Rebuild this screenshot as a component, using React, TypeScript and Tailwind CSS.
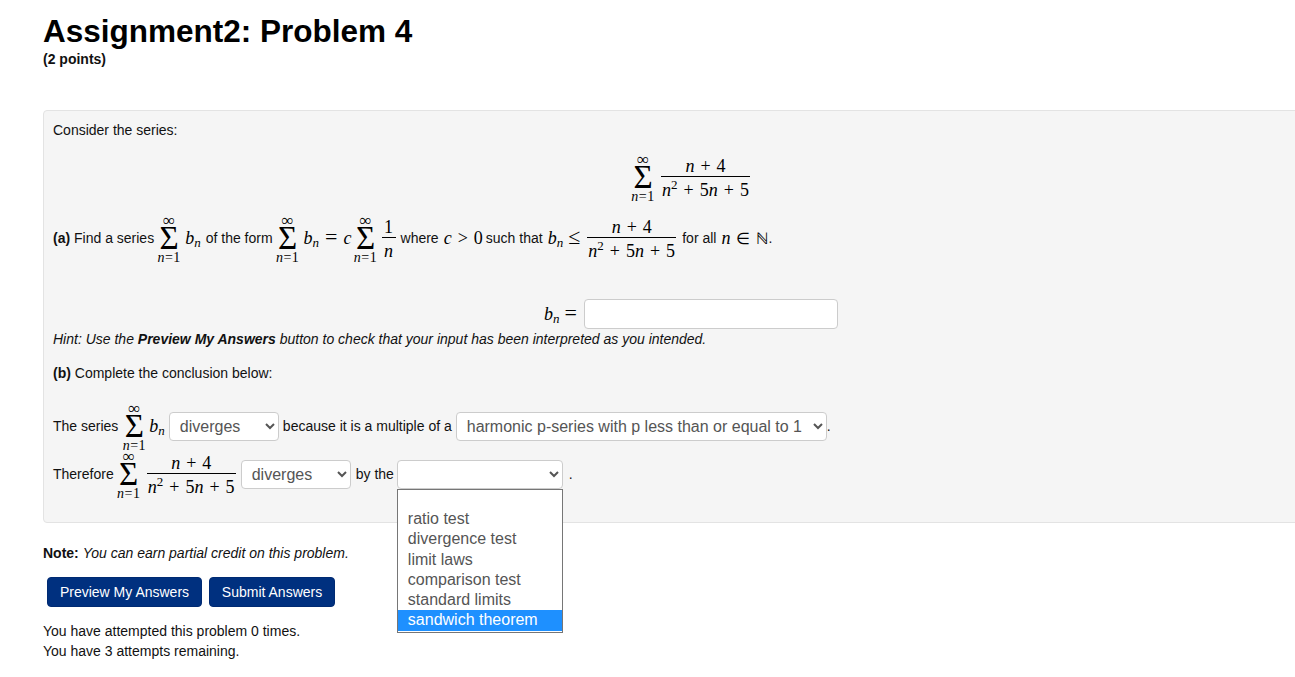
const math = "font-['Liberation_Serif',serif] text-black text-[18px] [word-spacing:1.5px]";

function Sum({ className = '' }: { className?: string }) {
  return (
    <span className={`inline-flex flex-col items-center w-[22px] pt-[3px] font-['Liberation_Serif',serif] text-black ${className}`}>
      <span className="h-[14px] leading-[14px] text-[17px]">∞</span>
      <span className="h-[21px] leading-[21px] text-[33px]">Σ</span>
      <span className="mt-[2px] h-[14px] leading-[14px] text-[14px] tracking-[0.5px] whitespace-nowrap"><i>n</i>=1</span>
    </span>
  );
}

function Bn({ className = '' }: { className?: string }) {
  return (
    <span className={`${math} italic whitespace-nowrap ${className}`}>
      b<sub className="text-[13px]">n</sub>
    </span>
  );
}

function Frac({ top, bottom, width }: { top: React.ReactNode; bottom: React.ReactNode; width: string }) {
  return (
    <span className={`inline-flex flex-col items-center ${width} ${math} whitespace-nowrap`}>
      <span className="h-[23px] leading-[25px] border-b border-black w-full text-center">{top}</span>
      <span className="h-[24px] leading-[27px]">{bottom}</span>
    </span>
  );
}

const numerator = <><i>n</i> + 4</>;
const denominator = <><i>n</i><sup className="text-[13px]">2</sup> + 5<i>n</i> + 5</>;

const selectCls = "h-[29px] bg-white border border-[#ccc] rounded-[4px] text-[16px] text-[#555] px-[6px] font-['Liberation_Sans',sans-serif]";

const options = ['ratio test', 'divergence test', 'limit laws', 'comparison test', 'standard limits'];

export default function App() {
  return (
    <div className="w-full h-[677px] overflow-hidden bg-white pl-[43px] pt-[10px] text-[14px] text-[#111] font-['Liberation_Sans',sans-serif]">
      <h1 className="h-[39px] leading-[42px] text-[31.5px] font-bold text-black">Assignment2: Problem 4</h1>
      <p className="h-[20px] leading-[20px] font-bold">(2 points)</p>

      <div className="mt-[41px] w-[1296px] bg-[#f5f5f5] border border-[#e3e3e3] rounded-[4px] px-[9px] pt-[9px] pb-[24px]">
        <p className="h-[20px] leading-[20px]">Consider the series:</p>

        <div className="mt-[7px] h-[60px] flex items-center justify-center">
          <Sum />
          <span className="ml-[7px]"><Frac top={numerator} bottom={denominator} width="w-[89px]" /></span>
        </div>

        <div className="mt-[6px] h-[50px] flex items-center whitespace-nowrap">
          <span><b>(a)</b> Find a series</span>
          <Sum className="ml-[4px]" />
          <Bn className="ml-[5px]" />
          <span className="ml-[5px]">of the form</span>
          <Sum className="ml-[4px]" />
          <Bn className="ml-[5px]" />
          <span className={`${math} ml-[6px]`}><span className="text-[22px] leading-none">=</span> <i>c</i></span>
          <Sum className="ml-[3px]" />
          <span className="ml-[5px]"><Frac top="1" bottom={<i>n</i>} width="w-[14px]" /></span>
          <span className="ml-[5px]">where</span>
          <span className={`${math} ml-[5px]`}><i>c</i> &gt; 0</span>
          <span className="ml-[3px]">such that</span>
          <Bn className="ml-[5px]" />
          <span className={`${math} ml-[5px]`}><span className="text-[22px] leading-none">≤</span></span>
          <span className="ml-[7px]"><Frac top={numerator} bottom={denominator} width="w-[89px]" /></span>
          <span className="ml-[6px]">for all</span>
          <span className={`${math} ml-[5px] [word-spacing:0px]`}><i>n</i> <span className="text-[16px]">∈</span> <span className="text-[16px]">ℕ</span></span>
          <span>.</span>
        </div>

        <div className="mt-[36px] h-[30px] flex items-center justify-center">
          <Bn />
          <span className={`${math} ml-[5px]`}><span className="text-[22px] leading-none">=</span></span>
          <input className="ml-[7px] w-[254px] h-[30px] bg-white border border-[#ccc] rounded-[4px]" />
        </div>

        <p className="h-[20px] leading-[20px] italic">
          Hint: Use the <b>Preview My Answers</b> button to check that your input has been interpreted as you intended.
        </p>

        <p className="mt-[14px] h-[20px] leading-[20px]"><b>(b)</b> Complete the conclusion below:</p>

        <div className="mt-[19px] h-[48px] flex items-center whitespace-nowrap">
          <span>The series</span>
          <Sum className="ml-[5px]" />
          <Bn className="ml-[4px]" />
          <select className={`${selectCls} ml-[4px] w-[110px]`} defaultValue="diverges">
            <option>diverges</option>
          </select>
          <span className="ml-[4px]">because it is a multiple of a</span>
          <select className={`${selectCls} ml-[4px] w-[371px]`} defaultValue="h">
            <option value="h">harmonic p-series with p less than or equal to 1</option>
          </select>
          <span>.</span>
        </div>

        <div className="h-[48px] flex items-center whitespace-nowrap">
          <span>Therefore</span>
          <Sum className="ml-[4px]" />
          <span className="ml-[7px]"><Frac top={numerator} bottom={denominator} width="w-[89px]" /></span>
          <select className={`${selectCls} ml-[5px] w-[110px]`} defaultValue="diverges">
            <option>diverges</option>
          </select>
          <span className="ml-[5px]">by the</span>
          <span className="relative ml-[3px] inline-flex">
            <select className={`${selectCls} w-[166px]`} defaultValue="">
              <option value=""></option>
            </select>
            {/* open dropdown list */}
            <span className="absolute z-10 left-0 top-[29px] w-[166px] h-[144px] bg-white border border-[#767676] text-[16px] leading-[20.3px] text-[#555]">
              <span className="block h-[19.5px]"></span>
              {options.map((o) => (
                <span key={o} className="block h-[20.3px] pl-[10px]">{o}</span>
              ))}
              <span className="block h-[20.3px] pl-[10px] bg-[#1e90ff] text-white">sandwich theorem</span>
            </span>
          </span>
          <span className="ml-[6px]">.</span>
        </div>
      </div>

      <p className="mt-[20px] h-[20px] leading-[20px]"><b>Note:</b> <i>You can earn partial credit on this problem.</i></p>

      <div className="mt-[14px] ml-[4px] flex gap-[7px]">
        <button className="w-[155px] h-[30px] bg-[#00307f] border border-[#002a72] rounded-[4px] text-white text-[14px]">Preview My Answers</button>
        <button className="w-[126px] h-[30px] bg-[#00307f] border border-[#002a72] rounded-[4px] text-white text-[14px]">Submit Answers</button>
      </div>

      <p className="mt-[14px] h-[20px] leading-[20px]">You have attempted this problem 0 times.</p>
      <p className="h-[20px] leading-[20px]">You have 3 attempts remaining.</p>
    </div>
  );
}
